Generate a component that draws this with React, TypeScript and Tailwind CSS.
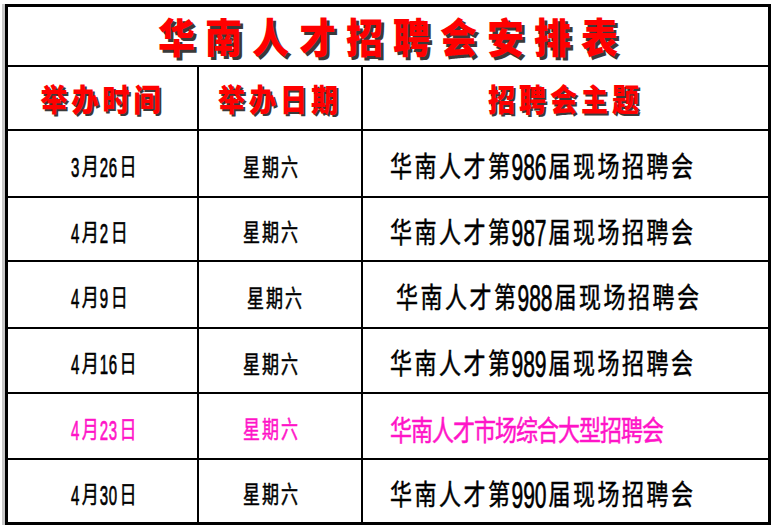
const CJK = '"Noto Sans CJK SC", "Noto Sans", sans-serif';

type Row = { date: string; day: string; topic: string; hot?: boolean };

const rows: Row[] = [
  { date: "3月26日", day: "星期六", topic: "华南人才第986届现场招聘会" },
  { date: "4月2日", day: "星期六", topic: "华南人才第987届现场招聘会" },
  { date: "4月9日", day: "星期六", topic: "华南人才第988届现场招聘会" },
  { date: "4月16日", day: "星期六", topic: "华南人才第989届现场招聘会" },
  { date: "4月23日", day: "星期六", topic: "华南人才市场综合大型招聘会", hot: true },
  { date: "4月30日", day: "星期六", topic: "华南人才第990届现场招聘会" },
];

// row heights include the 2px rule under each row
const heights = ["h-[67px]", "h-[64px]", "h-[67px]", "h-[65px]", "h-[66px]", "h-[62px]"];

// digits are drawn narrower and taller than the chinese, like the condensed face in the poster
function Mixed({ text, big, tight }: { text: string; big?: boolean; tight?: boolean }) {
  const parts = text.split(/(\d+)/).filter(Boolean);
  const cjkTrack = big ? (tight ? "tracking-[-1px]" : "tracking-[2.5px]") : "tracking-[2px]";
  return (
    <span
      className={`inline-block whitespace-nowrap origin-center [-webkit-text-stroke:0.4px_currentColor] ${
        big ? "scale-y-[1.3]" : "scale-y-[1.38]"
      }`}
    >
      {parts.map((p, i) =>
        /\d/.test(p) ? (
          <span
            key={i}
            className={`inline-block origin-center scale-y-[1.32] font-['Liberation_Sans',sans-serif] ${
              big ? "text-[21px] tracking-[0px] -ml-[1px] mr-[2px]" : "text-[15px] tracking-[0.5px] -ml-[1px] mr-[2px]"
            }`}
          >
            {p}
          </span>
        ) : (
          <span key={i} className={cjkTrack}>
            {p}
          </span>
        )
      )}
    </span>
  );
}

function Head({ children }: { children: string }) {
  return (
    <span className="inline-block scale-y-[1.15] text-[27px] font-black tracking-[4px] text-[#ff0000] [text-shadow:2px_2px_0_#3a3a3a]">
      {children}
    </span>
  );
}

export default function App() {
  return (
    <div className="w-[773px] h-[530px] bg-white pt-[4px] pl-[5px]" style={{ fontFamily: CJK }}>
      <div className="w-[766px] border-[3px] border-black shadow-[-3px_0_0_#c8c8c8]">
        <div className="h-[60px] border-b-2 border-black flex items-center justify-center">
          <span className="inline-block scale-y-[1.12] text-[37px] font-black tracking-[10px] pl-[10px] text-[#ff0000] [text-shadow:3px_3px_0_#3a3a3a]">
            华南人才招聘会安排表
          </span>
        </div>

        <div className="grid grid-cols-[191px_164px_1fr] h-[64px] border-b-2 border-black">
          <div className="border-r-2 border-black flex items-center justify-center">
            <Head>举办时间</Head>
          </div>
          <div className="border-r-2 border-black flex items-center justify-center">
            <Head>举办日期</Head>
          </div>
          <div className="flex items-center justify-center">
            <Head>招聘会主题</Head>
          </div>
        </div>

        {rows.map((r, i) => (
          <div
            key={i}
            className={`grid grid-cols-[191px_164px_1fr] ${heights[i]} ${
              i < rows.length - 1 ? "border-b-2 border-black" : ""
            } ${r.hot ? "text-[#ff14c8]" : "text-black"} font-normal`}
          >
            <div className="border-r-2 border-black flex items-center pl-[64px] pt-[4px] text-[17px]">
              <Mixed text={r.date} />
            </div>
            <div
              className={`border-r-2 border-black flex items-center pt-[4px] text-[17px] ${
                i === 2 ? "pl-[48px]" : "pl-[44px]"
              }`}
            >
              <Mixed text={r.day} />
            </div>
            <div className={`flex items-center pt-[4px] text-[22px] ${i === 2 ? "pl-[33px]" : "pl-[27px]"}`}>
              <Mixed text={r.topic} big tight={r.hot} />
            </div>
          </div>
        ))}
      </div>
    </div>
  );
}
